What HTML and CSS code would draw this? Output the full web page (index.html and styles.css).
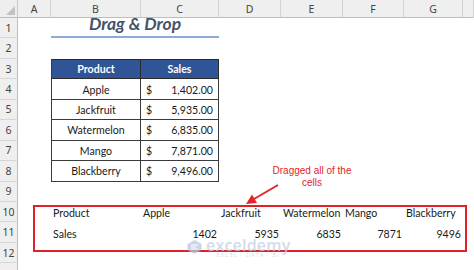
FILE: index.html
```html
<!DOCTYPE html>
<html>
<head>
<meta charset="utf-8">
<link rel="stylesheet" href="styles.css">
</head>
<body>
<div class="sheet">
  <div class="corner"><span class="tri"></span></div>
  <div class="ch">A</div><div class="ch">B</div><div class="ch">C</div><div class="ch">D</div><div class="ch">E</div><div class="ch">F</div><div class="ch">G</div><div class="ch last"></div>

  <div class="rh">1</div><div class="c"></div><div class="c title">Drag &amp; Drop</div><div class="c"></div><div class="c"></div><div class="c"></div><div class="c"></div><div class="c"></div>

  <div class="rh">2</div><div class="c"></div><div class="c"></div><div class="c"></div><div class="c"></div><div class="c"></div><div class="c"></div><div class="c"></div><div class="c"></div>

  <div class="rh">3</div><div class="c"></div><div class="c th first">Product</div><div class="c th">Sales</div><div class="c"></div><div class="c"></div><div class="c"></div><div class="c"></div><div class="c"></div>

  <div class="rh">4</div><div class="c"></div><div class="c td first">Apple</div><div class="c td money"><span>$</span><span>1,402.00</span></div><div class="c"></div><div class="c"></div><div class="c"></div><div class="c"></div><div class="c"></div>

  <div class="rh">5</div><div class="c"></div><div class="c td first">Jackfruit</div><div class="c td money"><span>$</span><span>5,935.00</span></div><div class="c"></div><div class="c"></div><div class="c"></div><div class="c"></div><div class="c"></div>

  <div class="rh">6</div><div class="c"></div><div class="c td first">Watermelon</div><div class="c td money"><span>$</span><span>6,835.00</span></div><div class="c"></div><div class="c"></div><div class="c"></div><div class="c"></div><div class="c"></div>

  <div class="rh">7</div><div class="c"></div><div class="c td first">Mango</div><div class="c td money"><span>$</span><span>7,871.00</span></div><div class="c"></div><div class="c"></div><div class="c"></div><div class="c"></div><div class="c"></div>

  <div class="rh">8</div><div class="c"></div><div class="c td first">Blackberry</div><div class="c td money"><span>$</span><span>9,496.00</span></div><div class="c"></div><div class="c"></div><div class="c"></div><div class="c"></div><div class="c"></div>

  <div class="rh">9</div><div class="c"></div><div class="c"></div><div class="c"></div><div class="c"></div><div class="c"></div><div class="c"></div><div class="c"></div><div class="c"></div>

  <div class="rh">10</div><div class="c"></div><div class="c">Product</div><div class="c">Apple</div><div class="c">Jackfruit</div><div class="c">Watermelon</div><div class="c">Mango</div><div class="c">Blackberry</div><div class="c"></div>

  <div class="rh">11</div><div class="c"></div><div class="c">Sales</div><div class="c num">1402</div><div class="c num">5935</div><div class="c num">6835</div><div class="c num">7871</div><div class="c num">9496</div><div class="c"></div>

  <div class="rh">12</div><div class="c"></div><div class="c"></div><div class="c"></div><div class="c"></div><div class="c"></div><div class="c"></div><div class="c"></div><div class="c"></div>

  <div class="rh"></div><div class="c"></div><div class="c"></div><div class="c"></div><div class="c"></div><div class="c"></div><div class="c"></div><div class="c"></div><div class="c"></div>

  <div class="note">Dragged all of the<br>cells</div>
  <svg class="arrow" width="474" height="270" viewBox="0 0 474 270">
    <line x1="278" y1="185" x2="254" y2="199" stroke="#E3242B" stroke-width="2"/>
    <polygon points="246,204 257,203 252,194.5" fill="#E3242B"/>
  </svg>
  <div class="redbox"></div>
  <div class="watermark">
    <svg class="wm-logo" width="17" height="16" viewBox="0 0 17 16">
      <path d="M8.5 1 L15.5 5 L15.5 11 L8.5 15 L1.5 11 L1.5 5 Z" fill="#B9C7DE"/>
      <path d="M5 6 L12 6 M5 8 L10 8 M5 10 L12 10" stroke="#ffffff" stroke-width="1.2"/>
    </svg>
    <div class="wm-text">
      <div class="wm-name">exceldemy</div>
      <div class="wm-sub">EXCEL · DATA · BI</div>
    </div>
  </div>
</div>
</body>
</html>
```

FILE: styles.css
```css
html, body {
  margin: 0;
  padding: 0;
  background: #ffffff;
}

.sheet {
  position: relative;
  width: 474px;
  height: 270px;
  overflow: hidden;
  display: grid;
  grid-template-columns: 18px 33px 90px 78px 62px 62px 61px 59px 11px;
  grid-template-rows: 18px repeat(13, 20.45px);
  font-family: "Lato", "Liberation Sans", sans-serif;
  font-size: 10.6px;
  color: #1a1a1a;
}

.corner {
  position: relative;
  background: #eeeeee;
  border-right: 1px solid #c9c9c9;
  border-bottom: 1px solid #bdbdbd;
  box-sizing: border-box;
}

.tri {
  position: absolute;
  right: 2px;
  bottom: 2px;
  width: 0;
  height: 0;
  border-left: 9px solid transparent;
  border-bottom: 9px solid #c3c3c3;
}

.ch {
  background: #efefef;
  border-right: 1px solid #d2d2d2;
  border-bottom: 1px solid #bdbdbd;
  box-sizing: border-box;
  display: flex;
  align-items: center;
  justify-content: center;
  font-family: "Noto Sans", "Liberation Sans", sans-serif;
  font-size: 10.5px;
  color: #444444;
  padding-top: 1px;
}

.rh {
  background: #efefef;
  border-right: 1px solid #bdbdbd;
  border-bottom: 1px solid #d6d6d6;
  box-sizing: border-box;
  display: flex;
  align-items: center;
  justify-content: center;
  font-family: "Noto Sans", "Liberation Sans", sans-serif;
  font-size: 10.5px;
  color: #444444;
}

.c {
  box-sizing: border-box;
  display: flex;
  align-items: flex-end;
  padding: 0 2px 3px 2px;
  white-space: nowrap;
  min-width: 0;
}

.c.num {
  justify-content: flex-end;
}

.title {
  grid-column: span 2;
  justify-content: center;
  align-items: flex-end;
  font-weight: 700;
  font-style: italic;
  font-size: 17.5px;
  color: #44546a;
  border-bottom: 2px solid #8eaadb;
  padding-bottom: 2px;
}

.th {
  background: #2f5597;
  color: #ffffff;
  font-weight: 700;
  justify-content: center;
  align-items: center;
  padding: 0;
  border-top: 1px solid #2b2b2b;
  border-right: 1px solid #2b2b2b;
  border-bottom: 1px solid #2b2b2b;
}

.td {
  justify-content: center;
  align-items: center;
  padding: 1px 0 0 0;
  border-right: 1px solid #3a3a3a;
  border-bottom: 1px solid #3a3a3a;
}

.first {
  border-left: 1px solid #3a3a3a;
}

.td.money {
  justify-content: space-between;
  padding: 1px 5px 0 5px;
}

.note {
  position: absolute;
  left: 262px;
  top: 165px;
  width: 100px;
  text-align: center;
  font-family: "Liberation Sans", Arial, sans-serif;
  font-size: 10px;
  line-height: 11.5px;
  color: #e3242b;
}

.arrow {
  position: absolute;
  left: 0;
  top: 0;
  pointer-events: none;
}

.redbox {
  position: absolute;
  left: 33px;
  top: 205px;
  width: 434px;
  height: 47px;
  box-sizing: border-box;
  border: 2px solid #e01f26;
}

.watermark {
  position: absolute;
  left: 186px;
  top: 238px;
  display: flex;
  align-items: flex-start;
  gap: 3px;
  opacity: 0.75;
}

.wm-logo {
  margin-top: 1px;
}

.wm-text {
  display: flex;
  flex-direction: column;
  align-items: center;
}

.wm-name {
  font-family: "Open Sans", "Liberation Sans", sans-serif;
  font-size: 16px;
  line-height: 14px;
  font-weight: 600;
  color: #c4cfe2;
  letter-spacing: 0.2px;
}

.wm-sub {
  font-family: "Open Sans", "Liberation Sans", sans-serif;
  font-size: 5.5px;
  line-height: 7px;
  letter-spacing: 1.2px;
  color: #c9d2e2;
}
```
